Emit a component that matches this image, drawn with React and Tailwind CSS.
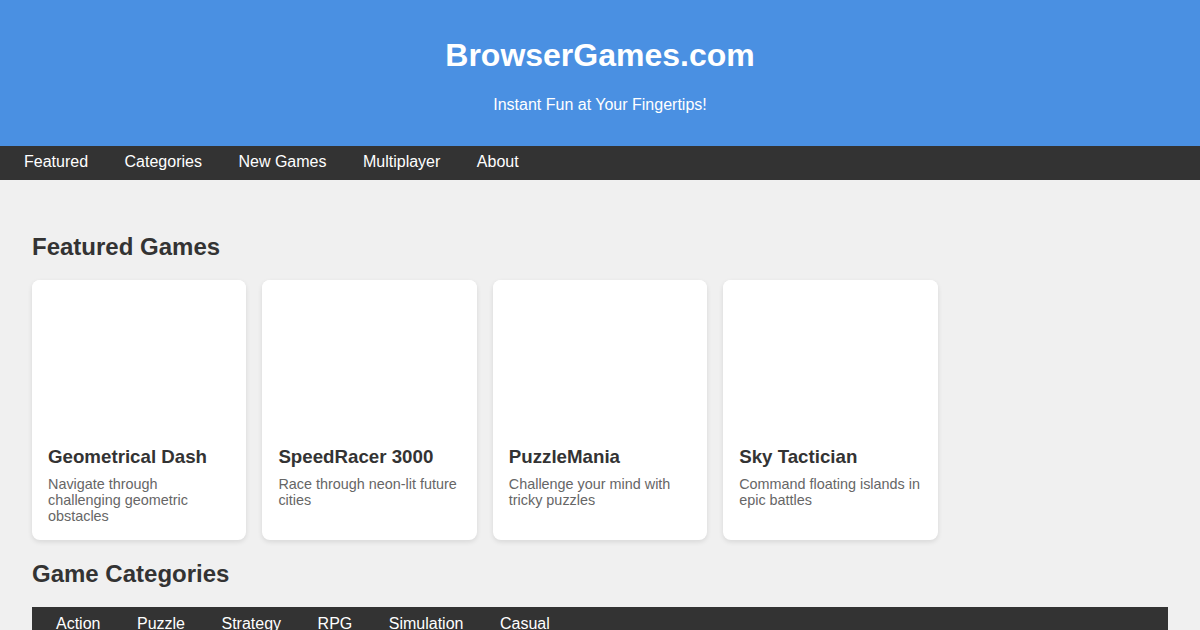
const navLinks = ['Featured', 'Categories', 'New Games', 'Multiplayer', 'About'];

const games = [
  { title: 'Geometrical Dash', desc: 'Navigate through challenging geometric obstacles' },
  { title: 'SpeedRacer 3000', desc: 'Race through neon-lit future cities' },
  { title: 'PuzzleMania', desc: 'Challenge your mind with tricky puzzles' },
  { title: 'Sky Tactician', desc: 'Command floating islands in epic battles' },
];

const categories = ['Action', 'Puzzle', 'Strategy', 'RPG', 'Simulation', 'Casual'];

function GameCard({ title, desc }) {
  return (
    <div className="bg-white rounded-lg shadow-[0_2px_5px_rgba(0,0,0,0.1)] overflow-hidden">
      <div className="h-[150px] bg-white" />
      <div className="p-4">
        <h3 className="text-[18.72px] font-bold text-[#333] mb-2">{title}</h3>
        <p className="text-[14.4px] leading-[16px] text-[#666]">{desc}</p>
      </div>
    </div>
  );
}

export default function App() {
  return (
    <div
      className="min-h-[630px] bg-[#f0f0f0] leading-[1.15]"
      style={{ fontFamily: '"Liberation Sans", Arial, sans-serif' }}
    >
      <header className="bg-[#4a90e2] text-white text-center pt-4 pb-4">
        <h1 className="text-[32px] font-bold mt-[21.4px] mb-[22px]">BrowserGames.com</h1>
        <p className="text-[16px] mb-[15px]">Instant Fun at Your Fingertips!</p>
      </header>

      <nav className="bg-[#333] h-[34px] flex items-center pl-6 gap-[36.5px]">
        {navLinks.map(l => (
          <a key={l} href="#" className="text-white text-[16px]">{l}</a>
        ))}
      </nav>

      <main className="px-8 pt-[53px]">
        <section>
          <h2 className="text-[24px] font-bold text-[#333] mb-5">Featured Games</h2>
          <div className="grid grid-cols-5 gap-4">
            {games.map(g => <GameCard key={g.title} {...g} />)}
          </div>
        </section>

        <section className="mt-5">
          <h2 className="text-[24px] font-bold text-[#333] mb-5">Game Categories</h2>
          <div className="bg-[#333] h-[34px] flex items-center pl-6 gap-[36.5px]">
            {categories.map(c => (
              <a key={c} href="#" className="text-white text-[16px]">{c}</a>
            ))}
          </div>
        </section>
      </main>
    </div>
  );
}
